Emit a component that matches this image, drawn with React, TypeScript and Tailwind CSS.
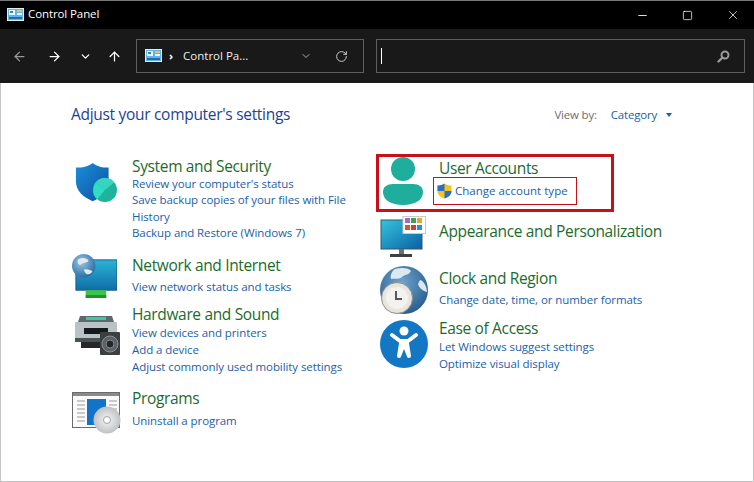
import { ArrowLeft, ArrowRight, ArrowUp, ChevronDown, RotateCw, Minus, Square, X } from "lucide-react";
import type { ReactNode } from "react";

const FONT = "font-['Open_Sans','Noto_Sans',sans-serif]";

function CpIcon() {
  return (
    <svg width="17" height="14" viewBox="0 0 17 14">
      <rect x="0.5" y="0.5" width="16" height="12" fill="#5fb5e8" stroke="#dbeefa" />
      <rect x="2" y="2" width="6" height="5" fill="#e9f4fb" />
      <rect x="3" y="3" width="3" height="2" fill="#2f86c9" />
      <rect x="10" y="2" width="5" height="2" fill="#f2c14e" />
      <rect x="10" y="5" width="5" height="2" fill="#e9f4fb" />
      <rect x="2" y="9" width="13" height="2" fill="#1f6fb0" />
    </svg>
  );
}

function ShieldIcon() {
  return (
    <svg width="42" height="43" viewBox="0 0 45 44">
      <defs>
        <linearGradient id="sh" x1="0" y1="0" x2="1" y2="1">
          <stop offset="0" stopColor="#1b8fdc" />
          <stop offset="1" stopColor="#0b4f9e" />
        </linearGradient>
      </defs>
      <path d="M19 1 C24 5 29 6 36 6 V22 C36 32 28 38 19 42 C9 38 1 31 1 21 V6 C8 6 14 5 19 1 Z" fill="url(#sh)" />
      <circle cx="32" cy="30" r="13" fill="#1fb39b" />
      <path d="M32 30 L22 22 A13 13 0 0 1 42 22 Z" fill="#37d5c0" />
      <path d="M32 30 L24 40 A13 13 0 0 1 20 27 L22 22 Z" fill="#2fdcc4" />
    </svg>
  );
}

function NetworkIcon() {
  return (
    <svg width="45" height="45" viewBox="0 0 46 46">
      <defs>
        <linearGradient id="mon" x1="0" y1="0" x2="0" y2="1">
          <stop offset="0" stopColor="#2cb3d6" />
          <stop offset="1" stopColor="#0f6ea8" />
        </linearGradient>
        <radialGradient id="gl" cx="0.4" cy="0.35" r="0.7">
          <stop offset="0" stopColor="#9cc7e6" />
          <stop offset="1" stopColor="#2468a0" />
        </radialGradient>
      </defs>
      <rect x="4" y="6" width="42" height="31" fill="url(#mon)" stroke="#1c5d80" />
      <rect x="14" y="37" width="21" height="8" fill="#3cc44a" />
      <rect x="14" y="42" width="21" height="3" fill="#1e8f33" />
      <circle cx="12" cy="12" r="12" fill="url(#gl)" />
      <path d="M6 6 C10 3 15 4 17 7 C14 10 12 8 9 11 C7 12 5 9 6 6 Z M12 16 C15 15 19 16 21 18 C18 22 14 22 12 16 Z" fill="#dfeaf3" />
    </svg>
  );
}

function PrinterIcon() {
  return (
    <svg width="46" height="42" viewBox="0 0 46 42">
      <path d="M6 2 H38 L40 8 H4 Z" fill="#5d6a6c" />
      <rect x="12" y="3" width="20" height="3" fill="#3fc6a8" />
      <rect x="1" y="8" width="42" height="18" rx="1" fill="#b9c2c4" />
      <rect x="10" y="14" width="24" height="6" fill="#16191b" />
      <rect x="1" y="24" width="42" height="4" fill="#4a5255" />
      <rect x="7" y="28" width="28" height="6" fill="#23282b" />
      <rect x="26" y="18" width="20" height="23" rx="1" fill="#3b3f42" />
      <circle cx="36" cy="30" r="8" fill="#5b6165" stroke="#8b9093" />
      <circle cx="36" cy="30" r="4" fill="#24282a" stroke="#85898c" />
    </svg>
  );
}

function ProgramsIcon() {
  return (
    <svg width="49" height="42" viewBox="0 0 49 42">
      <defs>
        <radialGradient id="cd" cx="0.5" cy="0.5" r="0.6">
          <stop offset="0" stopColor="#f5f5f5" />
          <stop offset="1" stopColor="#b4b8ba" />
        </radialGradient>
      </defs>
      <rect x="0.5" y="0.5" width="47" height="35" fill="#fafafa" stroke="#6b6b6b" />
      <rect x="1" y="1" width="46" height="3" fill="#8a8a8a" />
      <path d="M5 9 H13 M5 13 H13 M5 17 H13 M5 21 H13 M5 25 H13 M5 29 H13 M37 9 H45 M37 13 H45 M37 17 H45" stroke="#9a9a9a" />
      <rect x="15" y="7" width="19" height="26" fill="#1174c9" />
      <circle cx="35" cy="28" r="13.5" fill="url(#cd)" />
      <circle cx="35" cy="28" r="3.5" fill="#fff" stroke="#9da1a3" />
    </svg>
  );
}

function UserIcon() {
  return (
    <svg width="42" height="48" viewBox="0 0 42 48">
      <circle cx="21" cy="12" r="12" fill="#1fae9d" />
      <path d="M11 27 H31 C37 27 41 30 41 35 C41 43 33 48 21 48 C9 48 1 43 1 35 C1 30 5 27 11 27 Z" fill="#1fae9d" />
    </svg>
  );
}

function AppearanceIcon() {
  return (
    <svg width="46" height="42" viewBox="0 0 46 42">
      <defs>
        <linearGradient id="scr" x1="0" y1="0" x2="1" y2="1">
          <stop offset="0" stopColor="#35c4dc" />
          <stop offset="1" stopColor="#0b5fa5" />
        </linearGradient>
      </defs>
      <rect x="1" y="4" width="41" height="29" fill="url(#scr)" stroke="#33566e" />
      <rect x="19" y="33" width="5" height="5" fill="#6a6f72" />
      <rect x="10" y="38" width="22" height="3" fill="#3d4144" />
      <rect x="23" y="0.5" width="22.5" height="17" fill="#fff" stroke="#c9c9c9" />
      <rect x="25" y="2" width="5" height="5" fill="#a46bc6" />
      <rect x="31" y="2" width="5" height="5" fill="#3aa655" />
      <rect x="37" y="2" width="5" height="5" fill="#e0a63a" />
      <rect x="25" y="9" width="5" height="5" fill="#d8572a" />
      <rect x="31" y="9" width="5" height="5" fill="#c8452e" />
      <rect x="37" y="9" width="5" height="5" fill="#2a8fd0" />
    </svg>
  );
}

function ClockIcon() {
  return (
    <svg width="48" height="48" viewBox="0 0 48 48">
      <defs>
        <radialGradient id="eg" cx="0.45" cy="0.35" r="0.75">
          <stop offset="0" stopColor="#6fa6cf" />
          <stop offset="1" stopColor="#1d5484" />
        </radialGradient>
      </defs>
      <circle cx="24" cy="24" r="24" fill="url(#eg)" />
      <path d="M15 3 C22 1 29 2 31 5 C28 10 25 8 22 11 C18 14 14 12 11 13 C10 9 12 5 15 3 Z M40 14 C44 15 47 21 47 26 C43 25 39 22 38 18 Z" fill="#dce8f1" />
      <circle cx="17" cy="32" r="15.5" fill="#e8e4de" stroke="#8f8f8f" />
      <circle cx="17" cy="32" r="11" fill="#f4f2ee" />
      <path d="M16 25 V33 H22" fill="none" stroke="#55595c" strokeWidth="2" />
    </svg>
  );
}

function EaseIcon() {
  return (
    <svg width="48" height="48" viewBox="0 0 48 48">
      <circle cx="24" cy="24" r="24" fill="#1377c4" />
      <circle cx="24" cy="11" r="4.5" fill="#fff" />
      <path d="M12 15 L20 21 H28 L36 15" fill="none" stroke="#fff" strokeWidth="4" strokeLinecap="round" strokeLinejoin="round" />
      <path d="M19.5 20 H28.5 L31 36 Q31 38 29 38 Q27.5 38 27 36.5 L24 29 L21 36.5 Q20.5 38 19 38 Q17 38 17 36 Z" fill="#fff" />
    </svg>
  );
}

function UacShield() {
  return (
    <svg width="15" height="16" viewBox="0 0 15 16" className="shrink-0">
      <path d="M7.5 0.5 C9.5 2 12 2.5 14.5 2.5 V8 C14.5 12 11 14.5 7.5 15.5 C4 14.5 0.5 12 0.5 8 V2.5 C3 2.5 5.5 2 7.5 0.5 Z" fill="#f6c21c" />
      <path d="M7.5 0.5 C5.5 2 3 2.5 0.5 2.5 V8 H7.5 Z" fill="#2a6fc4" />
      <path d="M7.5 8 H14.5 C14.5 12 11 14.5 7.5 15.5 Z" fill="#2a6fc4" />
    </svg>
  );
}

// magnifier with the lens on the upper right, as Explorer draws it
function SearchGlyph() {
  return (
    <svg width="13" height="13" viewBox="0 0 13 13" className="ml-auto">
      <circle cx="8" cy="5" r="3.5" fill="none" stroke="#9a9a9a" strokeWidth="2" />
      <path d="M5.5 7.5 L1.5 11.5" stroke="#9a9a9a" strokeWidth="2.4" strokeLinecap="round" />
    </svg>
  );
}

function Heading({ children }: { children: ReactNode }) {
  return <div className="text-[15.5px] leading-[20px] text-[#1c6b2d] tracking-[-0.35px] whitespace-nowrap">{children}</div>;
}

function Category({
  icon,
  title,
  links,
  className,
  textClass = "",
  linksClass = "leading-[17px]",
}: {
  icon: ReactNode;
  title: string;
  links: string[];
  className: string;
  textClass?: string;
  linksClass?: string;
}) {
  return (
    <div className={`flex ${className}`}>
      <div className="w-[60px] shrink-0">{icon}</div>
      <div className={`flex-1 ${textClass}`}>
        <Heading>{title}</Heading>
        <div className={`text-[11.5px] text-[#1a5fa8] tracking-[-0.08px] ${linksClass}`}>
          {links.map((l) => (
            <div key={l}>{l}</div>
          ))}
        </div>
      </div>
    </div>
  );
}

export default function App() {
  return (
    <div className={`w-[754px] h-[482px] flex flex-col overflow-hidden bg-white ${FONT}`}>
      {/* Title bar */}
      <div className="h-[29px] bg-black border-t border-[#777] flex items-center text-white">
        <div className="ml-[7px]"><CpIcon /></div>
        <span className="ml-[4px] -mt-[2px] text-[11.5px] tracking-[-0.1px]">Control Panel</span>
        <div className="ml-auto flex items-center gap-[33px] mr-[14px]">
          <Minus size={13} strokeWidth={1.6} />
          <Square size={11} strokeWidth={1.6} />
          <X size={14} strokeWidth={1.3} />
        </div>
      </div>

      {/* Address bar */}
      <div className="h-[54px] bg-[#191919] flex items-center text-white">
        <div className="flex items-center w-[136px] pl-[12px]">
          <ArrowLeft size={15} strokeWidth={2} className="text-[#9a9a9a]" />
          <ArrowRight size={15} strokeWidth={2} className="ml-[20px]" />
          <ChevronDown size={13} strokeWidth={2.4} className="ml-[17px]" />
          <ArrowUp size={15} strokeWidth={2} className="ml-[15px]" />
        </div>
        <div className="w-[228px] h-[34px] border border-[#5f5f5f] flex items-center pl-[8px]">
          <CpIcon />
          <span className="ml-[7px] text-[11px] font-bold">›</span>
          <span className="ml-[10px] text-[11.5px] text-[#eee]">Control Pa...</span>
          <ChevronDown size={12} strokeWidth={1.8} className="ml-[52px] text-[#bbb]" />
          <RotateCw size={13} strokeWidth={1.8} className="ml-[23px] text-[#ccc]" />
        </div>
        <div className="ml-[12px] w-[369px] h-[34px] border border-[#5f5f5f] flex items-center pl-[4px] pr-[14px]">
          <div className="w-px h-[16px] bg-white" />
          <SearchGlyph />
        </div>
      </div>

      {/* Content */}
      <div className="flex-1 min-h-0 border-x border-b border-[#c4c4c4] pl-[70px] pr-[81px] flex flex-col">
        <div className="flex items-center justify-between h-[62px]">
          <h1 className="text-[15.5px] leading-[20px] text-[#1f3f94] tracking-[-0.3px]">Adjust your computer's settings</h1>
          <div className="flex items-center pt-[1px] text-[11.5px] tracking-[-0.2px]">
            <span className="text-[#6e6e6e]">View by:</span>
            <span className="ml-[14px] text-[#1a5fa8]">Category</span>
            <span className="ml-[9px] w-0 h-0 border-x-[3.5px] border-x-transparent border-t-[4px] border-t-[#1a5fa8]" />
          </div>
        </div>

        <div className="flex mt-[12px]">
          {/* Left column */}
          <div className="w-[306px] pl-[1px] pr-[24px] -mt-[1px]">
            <Category
              className="h-[99px]"
              icon={<div className="pl-[3px] pt-[5px]"><ShieldIcon /></div>}
              title="System and Security"
              linksClass="leading-[16.33px]"
              links={["Review your computer's status", "Save backup copies of your files with File History", "Backup and Restore (Windows 7)"]}
            />
            <Category
              className="h-[49px]"
              icon={<div className="-mt-[1px]"><NetworkIcon /></div>}
              title="Network and Internet"
              linksClass="mt-[3px] leading-[17px]"
              links={["View network status and tasks"]}
            />
            <Category
              className="h-[84px]"
              icon={<div className="pl-[2px] pt-[10px]"><PrinterIcon /></div>}
              title="Hardware and Sound"
              links={["View devices and printers", "Add a device", "Adjust commonly used mobility settings"]}
            />
            <Category
              className="h-[44px]"
              icon={<div className="pt-[4px]"><ProgramsIcon /></div>}
              title="Programs"
              linksClass="mt-[4px] leading-[17px]"
              links={["Uninstall a program"]}
            />
          </div>

          {/* Right column */}
          <div className="w-[280px]">
            <div className="w-[238px] h-[58px] -mt-[3px] -ml-[1px] border-[3px] border-[#c8101a] flex">
              <div className="w-[60px] shrink-0 pl-[3px]"><UserIcon /></div>
              <div className="pt-[1px]">
                <Heading>User Accounts</Heading>
                <div className="-ml-[6px] -mt-[1px] w-[144px] h-[28px] border border-[#c8101a] flex items-center gap-[3px] pl-[3px]">
                  <UacShield />
                  <span className="text-[11.5px] text-[#1a5fa8] tracking-[0.02px]">Change account type</span>
                </div>
              </div>
            </div>
            <Category
              className="h-[50px] mt-[4px] pl-[3px] [&>div:first-child]:w-[59px]"
              icon={<AppearanceIcon />}
              title="Appearance and Personalization"
              textClass="pt-[5px]"
              links={[]}
            />
            <Category
              className="h-[54px] pl-[3px] [&>div:first-child]:w-[59px]"
              icon={<ClockIcon />}
              title="Clock and Region"
              textClass="pt-[2px]"
              linksClass="mt-[3px] leading-[17px]"
              links={["Change date, time, or number formats"]}
            />
            <Category
              className="pl-[3px] [&>div:first-child]:w-[59px]"
              icon={<EaseIcon />}
              title="Ease of Access"
              textClass="-mt-[2px]"
              linksClass="leading-[17px]"
              links={["Let Windows suggest settings", "Optimize visual display"]}
            />
          </div>
        </div>
      </div>
    </div>
  );
}
